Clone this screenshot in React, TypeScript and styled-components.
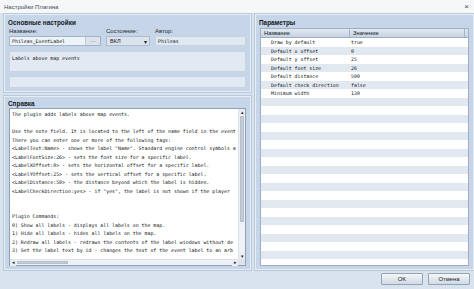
import React from "react";
import styled, { createGlobalStyle } from "styled-components";

const helpLines = [
  "The plugin adds labels above map events.",
  "",
  "Use the note field. It is located to the left of the name field in the event",
  "There you can enter one or more of the following tags:",
  '<LabelText:Name> - shows the label "Name". Standard engine control symbols a',
  "<LabelFontSize:26> - sets the font size for a specific label.",
  "<LabelXOffset:0> - sets the horizontal offset for a specific label.",
  "<LabelYOffset:25> - sets the vertical offset for a specific label.",
  "<LabelDistance:50> - the distance beyond which the label is hidden.",
  '<LabelCheckDirection:yes> - if "yes", the label is not shown if the player',
  "",
  "",
  "Plugin Commands:",
  "0) Show all labels - displays all labels on the map.",
  "1) Hide all labels - hides all labels on the map.",
  "2) Redraw all labels - redraws the contents of the label windows without de",
  "3) Set the label text by id - changes the text of the event label to an arb",
];

const params = [
  { name: "Draw by default", value: "true" },
  { name: "Default x offset", value: "0" },
  { name: "Default y offset", value: "25" },
  { name: "Default font size", value: "26" },
  { name: "Default distance", value: "500" },
  { name: "Default check direction", value: "false" },
  { name: "Minimum width", value: "130" },
];

const EMPTY_ROWS = 20;

export default function App() {
  return (
    <>
      <GlobalStyle />
      <Window>
        <TitleBar>
          <Title>Настройки Плагина</Title>
          <Close>×</Close>
        </TitleBar>
        <Content>
          <LeftColumn>
            <MainPanel>
              <PanelHeader>Основные настройки</PanelHeader>
              <FieldGrid>
                <FieldLabel>Название:</FieldLabel>
                <FieldLabel>Состояние:</FieldLabel>
                <FieldLabel>Автор:</FieldLabel>
                <NameField>
                  <MonoText>
                    Phileas<Underscore>_</Underscore>EventLabel
                  </MonoText>
                  <DotsButton>···</DotsButton>
                </NameField>
                <Combo>
                  <span>ВКЛ</span>
                  <Arrow>▾</Arrow>
                </Combo>
                <ReadOnlyField>
                  <MonoText>Phileas</MonoText>
                </ReadOnlyField>
              </FieldGrid>
              <DescBox>
                <MonoText>Labels above map events</MonoText>
              </DescBox>
              <EmptyBox />
            </MainPanel>
            <HelpPanel>
              <PanelHeader>Справка</PanelHeader>
              <TextArea>
                <TextBody>
                  {helpLines.map((line, i) => (
                    <Line key={i}>{line || " "}</Line>
                  ))}
                </TextBody>
                <VScroll>
                  <ScrollBtn>▴</ScrollBtn>
                  <VTrack>
                    <VThumb />
                  </VTrack>
                  <ScrollBtn>▾</ScrollBtn>
                </VScroll>
                <HScroll>
                  <ScrollBtn>◂</ScrollBtn>
                  <HTrack>
                    <HThumb />
                  </HTrack>
                  <ScrollBtn>▸</ScrollBtn>
                </HScroll>
                <Corner />
              </TextArea>
            </HelpPanel>
          </LeftColumn>
          <ParamsPanel>
            <PanelHeader>Параметры</PanelHeader>
            <Table>
              <HeaderRow>
                <HeadCell>Название</HeadCell>
                <HeadCell>Значение</HeadCell>
                <HeadCell />
              </HeaderRow>
              {params.map((p, i) => (
                <Row key={p.name} $odd={i % 2 === 1}>
                  <NameCell>{p.name}</NameCell>
                  <ValueCell>{p.value}</ValueCell>
                </Row>
              ))}
              {Array.from({ length: EMPTY_ROWS }).map((_, i) => (
                <Row key={"e" + i} $odd={(i + params.length) % 2 === 1} />
              ))}
            </Table>
          </ParamsPanel>
        </Content>
        <Footer>
          <Button>OK</Button>
          <Button>Отмена</Button>
        </Footer>
      </Window>
    </>
  );
}

const GlobalStyle = createGlobalStyle`
  html, body { margin: 0; padding: 0; }
  body { background: #dde6f0; }
`;

const Window = styled.div`
  width: 474px;
  height: 289px;
  display: flex;
  flex-direction: column;
  background: #d9e3ee;
  font-family: "Liberation Sans", Arial, sans-serif;
  color: #1e2329;
  overflow: hidden;
`;

const TitleBar = styled.div`
  height: 13px;
  flex: none;
  display: flex;
  align-items: center;
  justify-content: space-between;
  padding: 0 5px 0 4px;
  background: #f6f7f9;
`;

const Title = styled.span`
  font-size: 6px;
  color: #454c55;
`;

const Close = styled.span`
  font-size: 8px;
  color: #444;
`;

const Content = styled.div`
  height: 257px;
  flex: none;
  padding: 1px 4px 0 4px;
  display: grid;
  grid-template-columns: 247px 1fr;
  column-gap: 4px;
  box-sizing: border-box;
`;

const LeftColumn = styled.div`
  display: flex;
  flex-direction: column;
  gap: 4px;
  min-height: 0;
`;

const Panel = styled.div`
  background: #c6d5e7;
  border: 1px solid #e6edf5;
  box-shadow: 0 0 0 1px #b9c9dc;
  box-sizing: border-box;
  display: flex;
  flex-direction: column;
  min-height: 0;
`;

const MainPanel = styled(Panel)`
  height: 78px;
  flex: none;
  padding: 3px 3px 3px 3px;
`;

const HelpPanel = styled(Panel)`
  flex: 1;
  padding: 2px 3px 3px 3px;
`;

const ParamsPanel = styled(Panel)`
  padding: 3px 3px 3px 3px;
`;

const PanelHeader = styled.div`
  height: 9px;
  line-height: 9px;
  font-size: 6.4px;
  font-weight: bold;
  color: #14181d;
  flex: none;
`;

const FieldGrid = styled.div`
  display: grid;
  grid-template-columns: 92px 44px 1fr;
  grid-template-rows: 9px 10px;
  column-gap: 5px;
  padding: 0 1px;
`;

const FieldLabel = styled.div`
  font-size: 6px;
  line-height: 9px;
  color: #262b32;
`;

const MonoText = styled.span`
  display: block;
  font-family: "DejaVu Sans Mono", "Liberation Mono", monospace;
  font-size: 4.9px;
  line-height: 8px;
  height: 8px;
  color: #111418;
  white-space: pre;
`;

const Underscore = styled.span`
  font-weight: bold;
  position: relative;
  top: -0.5px;
`;

const NameField = styled.div`
  display: flex;
  align-items: center;
  justify-content: space-between;
  background: #eef3f9;
  border: 1px solid #a3b4c9;
  padding-left: 2px;
  box-sizing: border-box;
`;

const DotsButton = styled.span`
  height: 100%;
  width: 14px;
  display: flex;
  align-items: center;
  justify-content: center;
  font-size: 6px;
  color: #445;
  background: #dbe4ee;
  border-left: 1px solid #c0ccda;
`;

const Combo = styled.div`
  display: flex;
  align-items: center;
  justify-content: space-between;
  background: #dbe3ed;
  border: 1px solid #adbccf;
  padding: 0 2px 0 3px;
  font-size: 5.6px;
  color: #1c2026;
  box-sizing: border-box;
`;

const Arrow = styled.span`
  font-size: 6px;
  color: #222;
`;

const ReadOnlyField = styled.div`
  display: flex;
  align-items: center;
  background: #e0e8f1;
  border: 1px solid #c8d3e0;
  padding-left: 2px;
  box-sizing: border-box;
`;

const DescBox = styled.div`
  height: 21px;
  margin: 5px 1px 0;
  background: #e2e9f2;
  border: 1px solid #c7d3e0;
  box-sizing: border-box;
  padding: 2px 2px;
`;

const EmptyBox = styled.div`
  height: 12px;
  margin: 4px 1px 0;
  background: #e2e9f2;
  border: 1px solid #c7d3e0;
  box-sizing: border-box;
`;

const TextArea = styled.div`
  flex: 1;
  min-height: 0;
  margin: 0 1px;
  display: grid;
  grid-template-columns: 1fr 7px;
  grid-template-rows: 1fr 6px;
  background: #fff;
  border: 1px solid #8ea1b7;
  box-sizing: border-box;
`;

const TextBody = styled.div`
  overflow: hidden;
  padding: 1px 0 0 2px;
`;

const Line = styled.div`
  font-family: "DejaVu Sans Mono", "Liberation Mono", monospace;
  font-size: 4.9px;
  line-height: 8.5px;
  height: 8.5px;
  white-space: pre;
  color: #111418;
`;

const ScrollBtn = styled.div`
  flex: none;
  width: 6px;
  height: 6px;
  display: flex;
  align-items: center;
  justify-content: center;
  font-size: 5px;
  line-height: 1;
  color: #222;
  background: #e9edf2;
`;

const VScroll = styled.div`
  display: flex;
  flex-direction: column;
  align-items: center;
  background: #eef1f5;
  border-left: 1px solid #dde3ea;
`;

const VTrack = styled.div`
  flex: 1;
  width: 100%;
  padding: 1px 1px;
  box-sizing: border-box;
`;

const VThumb = styled.div`
  height: 78%;
  background: #c7ced8;
  border: 1px solid #b5bfcb;
  box-sizing: border-box;
`;

const HScroll = styled.div`
  display: flex;
  align-items: center;
  background: #eef1f5;
  border-top: 1px solid #dde3ea;
`;

const HTrack = styled.div`
  flex: 1;
  height: 100%;
  padding: 1px 1px;
  box-sizing: border-box;
`;

const HThumb = styled.div`
  width: 24%;
  height: 100%;
  background: #c7ced8;
  border: 1px solid #b5bfcb;
  box-sizing: border-box;
`;

const Corner = styled.div`
  background: #dfe4ea;
`;

const Table = styled.div`
  flex: 1;
  min-height: 0;
  margin: 1px 1px 0;
  overflow: hidden;
  background: #fff;
  border: 1px solid #9dafc4;
  box-sizing: border-box;
`;

const HeaderRow = styled.div`
  display: grid;
  grid-template-columns: 89px 115px 1fr;
  height: 9px;
  background: linear-gradient(#e2e9f1, #c5d2e1);
  border-bottom: 1px solid #9dafc4;
  box-sizing: border-box;
`;

const HeadCell = styled.div`
  font-size: 5.8px;
  line-height: 8px;
  padding-left: 3px;
  color: #14181d;
  border-right: 1px solid #a5b5c8;
  &:last-child { border-right: none; }
`;

const Row = styled.div<{ $odd: boolean }>`
  display: grid;
  grid-template-columns: 89px 1fr;
  height: 8.5px;
  line-height: 8.5px;
  background: ${(p) => (p.$odd ? "#e1e8f0" : "#ffffff")};
  font-family: "DejaVu Sans Mono", "Liberation Mono", monospace;
  font-size: 4.9px;
  color: #111418;
`;

const NameCell = styled.div`
  padding-left: 10px;
  white-space: pre;
`;

const ValueCell = styled.div`
  padding-left: 1px;
  white-space: pre;
`;

const Footer = styled.div`
  flex: 1;
  display: flex;
  justify-content: flex-end;
  align-items: flex-start;
  gap: 5px;
  padding: 3px 4px 0 0;
`;

const Button = styled.button`
  width: 42px;
  height: 12px;
  padding: 0;
  font-family: "Liberation Sans", Arial, sans-serif;
  font-size: 5.8px;
  color: #14181d;
  background: linear-gradient(#f5f7f9, #d1d9e3);
  border: 1px solid #93a4b8;
  border-radius: 1px;
`;
